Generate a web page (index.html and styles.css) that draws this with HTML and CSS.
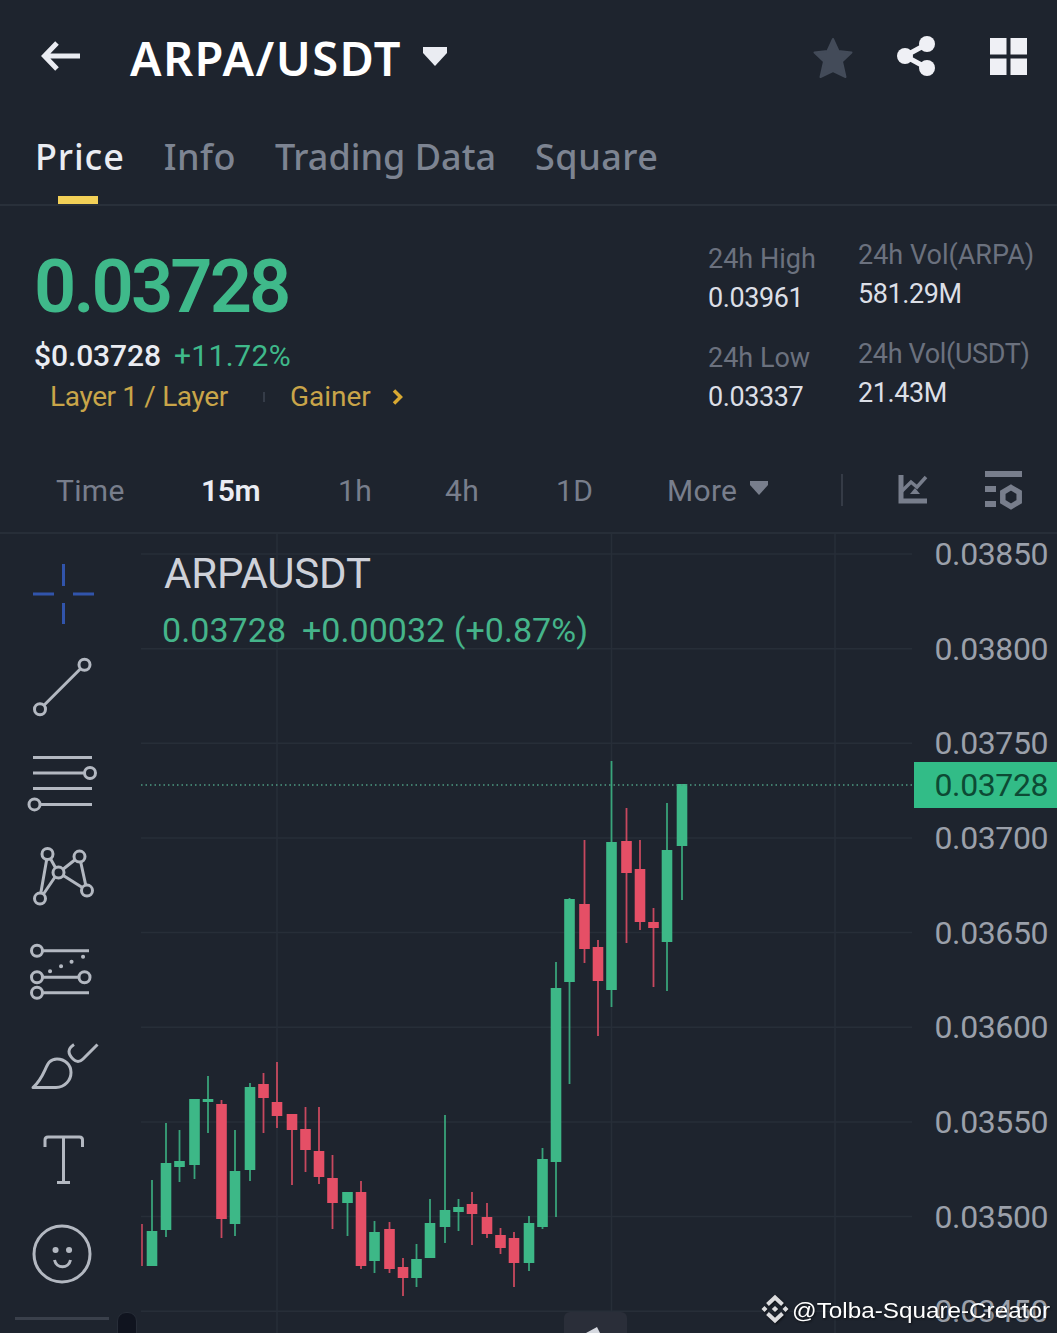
FILE: index.html
```html
<!DOCTYPE html>
<html lang="en">
<head>
  <meta charset="UTF-8" />
  <meta name="viewport" content="width=device-width, initial-scale=1.0"/>
  <title>ARPA/USDT</title>
  <link rel="stylesheet" href="styles.css">
</head>
<body>

  <!-- Header -->
  <header>
    <svg class="back" width="42" height="34" viewBox="0 0 42 34"><path d="M17 4 4.500 17 17 30M4 17h36"/></svg>
    <h1>ARPA/USDT</h1>
    <svg class="caret" width="24" height="20" viewBox="0 0 24 20"><path d="M0 0h24v6L12 19 0 6z"/></svg>
    <div class="actions">
      <svg class="star" width="40" height="42" viewBox="0 0 40 42"><path d="M20 2l5.500 12 13 1.500-9.500 9 3.500 15.500-12.500-6-12.500 6L11 24.500l-9.500-9 13-1.500z"/></svg>
      <svg class="share" width="40" height="42" viewBox="0 0 40 42"><path d="M30 9 8 21l22 12"/><circle cx="30" cy="9" r="8"/><circle cx="8" cy="21" r="8"/><circle cx="30" cy="33" r="8"/></svg>
      <svg class="apps" width="37" height="37" viewBox="0 0 37 37"><path d="M0 0h16.500v16.500H0zM20.500 0H37v16.500H20.500zM0 20.500h16.500V37H0zM20.500 20.500H37V37H20.500z"/></svg>
    </div>
  </header>

  <!-- Tabs -->
  <nav class="tabs">
    <a class="active" href="#price">Price</a>
    <a class="info" href="#info">Info</a>
    <a class="data" href="#data">Trading Data</a>
    <a class="square" href="#square">Square</a>
  </nav>

  <!-- Ticker -->
  <section class="ticker" id="price">
    <div class="quote">
      <div class="last">0.03728</div>
      <div class="fiat"><span class="usd">$0.03728</span><span class="change">+11.72%</span></div>
      <div class="tags">
        <span class="tag-layer">Layer 1 / Layer</span>
        <i></i>
        <span class="tag-gainer">Gainer</span>
        <svg width="11" height="16" viewBox="0 0 11 16"><path d="M2 1.500 8.500 8 2 14.500"/></svg>
      </div>
    </div>
    <dl class="stats">
      <dt>24h High</dt><dd>0.03961</dd>
      <dt>24h Low</dt><dd>0.03337</dd>
    </dl>
    <dl class="stats volume">
      <dt>24h Vol(ARPA)</dt><dd>581.29M</dd>
      <dt class="usdt">24h Vol(USDT)</dt><dd>21.43M</dd>
    </dl>
  </section>

  <!-- Timeframes -->
  <div class="frames">
    <span>Time</span>
    <span class="active">15m</span>
    <span>1h</span>
    <span>4h</span>
    <span>1D</span>
    <span class="more">More <svg width="20" height="15" viewBox="0 0 20 15"><path d="M1 0h18v4l-9 10L1 4z"/></svg></span>
    <i></i>
    <svg class="indicator" width="30" height="32" viewBox="0 0 30 32">
      <path d="M3 1v26h26" stroke-width="5"/>
      <path d="M4 17l9-9 6 5L28 3" stroke-width="3.500"/>
      <path d="M12 20h10l-5-6z" fill="#787e8c" stroke="none"/>
    </svg>
    <svg class="settings" width="38" height="40" viewBox="0 0 38 40">
      <path d="M0 4h37M0 19h11M0 34h11" stroke-width="6"/>
      <path d="M26 17.500l8.200 4.800v9.400L26 36.500l-8.200-4.800v-9.400z" stroke-width="5.500"/>
    </svg>
  </div>

  <main>
    <!-- Drawing tools -->
    <aside>
      <svg class="cross" width="90" height="94" viewBox="0 0 90 94"><path d="M13 47h21M53 47h21M43.500 17v22M43.500 56v21"/></svg>
      <svg width="90" height="94" viewBox="0 0 90 94"><path d="M24 64.200l36.500-36.500"/><circle cx="64.500" cy="23.700" r="5.500"/><circle cx="20" cy="68.200" r="5.500"/></svg>
      <svg width="90" height="94" viewBox="0 0 90 94"><path d="M13 21.400h59M13 37h51M13 52.400h59M20 68.400h52"/><circle cx="70" cy="37" r="5.500"/><circle cx="14.500" cy="68.400" r="5.500"/></svg>
      <svg width="90" height="94" viewBox="0 0 90 94"><path d="M26.700 29.500 20.800 63M30.500 28.700l5 9M35 47 23.500 64M43 39.300l12-9.500M43.300 45.600l19 12M60.700 32l5 23"/><circle cx="27.500" cy="24" r="5.500"/><circle cx="59.500" cy="26.600" r="5.500"/><circle cx="38.500" cy="42.600" r="5.500"/><circle cx="20" cy="68.600" r="5.500"/><circle cx="67" cy="60.600" r="5.500"/></svg>
      <svg width="90" height="94" viewBox="0 0 90 94"><path d="M22.500 26.800H69M22.500 53.300H59M22.500 68.800H69"/><circle cx="17" cy="26.800" r="5.500"/><circle cx="17" cy="53.300" r="5.500"/><circle cx="64.500" cy="53.300" r="5.500"/><circle cx="17" cy="68.800" r="5.500"/><path class="dots" d="M30 47.300h.1M41 42.300h.1M51.500 37.800h.1M63 32.800h.1"/></svg>
      <svg width="90" height="94" viewBox="0 0 90 94"><path stroke-linejoin="round" d="M13 69.500C28 56 24 41 37 41c8 0 14 6 14 13.500S45 69.500 36 69.500zM54 26.500C47 31 48 36 53 41c4 4 7 3 10 0l14.500-14.500"/></svg>
      <svg width="90" height="94" viewBox="0 0 90 94"><path d="M25 34v-7q0-3 3-3h31.500q3 0 3 3v7M43.500 24v45.500M37 69.500h13"/></svg>
      <svg width="90" height="94" viewBox="0 0 90 94"><circle cx="42" cy="47" r="28"/><path d="M34.500 53c2 9 14 9 16 0"/><path class="eyes" d="M35.500 43h.1M49 43h.1"/></svg>
    </aside>

    <!-- Candles, prices and grid are drawn by chart.js -->
    <svg id="chart" width="916" height="799" viewBox="141 534 916 799">
      <g id="grid"></g>
      <g id="candles"></g>
      <path class="last-line" d="M141 785H914"/>
      <text class="symbol" x="164" y="587.500" textLength="207">ARPAUSDT</text>
      <text class="delta" x="162" y="641.500" textLength="124">0.03728</text>
      <text class="delta" x="302" y="641.500" textLength="286">+0.00032 (+0.87%)</text>
      <g id="axis"></g>
      <rect class="badge" x="914" y="762" width="143" height="46"/>
      <text class="badge-text" x="934.500" y="796" textLength="114">0.03728</text>
      <rect class="scroll-btn" x="564" y="1312" width="63" height="40" rx="6"/>
      <path class="scroll-arrow" d="M586 1333l11-6 3 6z"/>
    </svg>

    <div class="tools-end"></div>
    <div class="handle"></div>

    <!-- Watermark -->
    <svg class="watermark" width="300" height="36" viewBox="757 1292 300 36">
      <path d="M767.500 1304.500l7.500-7 7.500 7M767.500 1313.500l7.500 7 7.500-7" fill="none" stroke="#dcdcde" stroke-width="4"/>
      <path d="M775 1306l3.200 3-3.200 3-3.200-3zM764.500 1306l3 3-3 3-3-3zM785.500 1306l3 3-3 3-3-3z" fill="#dcdcde"/>
      <text x="792" y="1318" textLength="258" lengthAdjust="spacingAndGlyphs">@Tolba-Square-Creator</text>
    </svg>
  </main>

  <script src="chart.js"></script>
</body>
</html>
```
FILE: styles.css
```css
/* --------------------------------
   Reset / Basic
----------------------------------- */
* {
  margin: 0;
  padding: 0;
  box-sizing: border-box;
}
body {
  height: 1333px;
  overflow: hidden;
  font-family: Roboto, 'Liberation Sans', sans-serif;
  color: #eaecf2;
  background: #1e242e;
}
a {
  color: inherit;
  text-decoration: none;
}
svg {
  display: block;
  flex: none;
}

/* --------------------------------
   Header
----------------------------------- */
header {
  height: 116px;
  padding: 0 30px 0 40px;
  display: flex;
  align-items: center;
}
header h1 {
  width: 293px;
  margin-left: 48px;
  font-family: 'Noto Sans', sans-serif;
  font-size: 47px;
  font-weight: 600;
  line-height: 60px;
  letter-spacing: 1.4px;
  white-space: nowrap;
  color: #fff;
}
.back {
  margin-bottom: 4px;
  fill: none;
  stroke: #eaecf2;
  stroke-width: 5;
}
.caret {
  margin-bottom: 2px;
  fill: #eaecf2;
}
.actions {
  margin-left: auto;
  display: flex;
  align-items: center;
}
.star {
  margin-right: 44px;
  fill: #434b59;
  stroke: #434b59;
  stroke-width: 2;
  stroke-linejoin: round;
}
.share {
  margin-right: 53px;
  margin-bottom: 4px;
  fill: #eff0f5;
}
.share path {
  fill: none;
  stroke: #eff0f5;
  stroke-width: 5;
}
.apps {
  margin-bottom: 3px;
  fill: #eff0f5;
}

/* --------------------------------
   Tabs
----------------------------------- */
.tabs {
  height: 90px;
  padding-left: 35px;
  display: flex;
  gap: 39px;
  border-bottom: 2px solid #29303a;
  font-family: 'Noto Sans', sans-serif;
  font-size: 36px;
  font-weight: 500;
  line-height: 81px;
  white-space: nowrap;
  color: #7d8492;
}
.tabs .active {
  position: relative;
  letter-spacing: 0.9px;
  color: #eaecf2;
}
.tabs .active::after {
  content: "";
  position: absolute;
  left: 23px;
  bottom: 0;
  width: 40px;
  height: 8px;
  background: #f2d057;
}
.info,
.square {
  letter-spacing: 0.5px;
}

/* --------------------------------
   Ticker
----------------------------------- */
.ticker {
  height: 246px;
  padding-left: 34px;
  display: flex;
}
.quote {
  width: 674px;
  padding-top: 40px;
}
.last {
  font-size: 74px;
  font-weight: 600;
  line-height: 82px;
  letter-spacing: -2.9px;
  color: #3fb98a;
}
.fiat {
  display: flex;
  gap: 13px;
  font-size: 30px;
  font-weight: 500;
  line-height: 56px;
}
.usd {
  letter-spacing: -0.1px;
}
.change {
  font-weight: 400;
  letter-spacing: 0.4px;
  color: #3fb98a;
}
.tags {
  padding-left: 16px;
  display: flex;
  align-items: center;
  font-size: 28px;
  line-height: 26px;
  color: #c9a549;
}
.tags i {
  width: 2px;
  height: 10px;
  margin: 0 25px 0 35px;
  background: #353c48;
}
.tags svg {
  margin-left: 21px;
  fill: none;
  stroke: #d9a932;
  stroke-width: 3.5;
}
.tag-layer {
  letter-spacing: -0.35px;
}
.stats {
  width: 150px;
  padding-top: 34px;
  font-size: 27px;
  line-height: 39px;
  white-space: nowrap;
}
.stats dt {
  color: #6b717e;
}
.stats dd {
  margin-bottom: 21px;
  letter-spacing: -0.4px;
  color: #dcdfe6;
}
.volume {
  padding-top: 30px;
}
.volume .usdt {
  letter-spacing: -0.35px;
}

/* --------------------------------
   Timeframes
----------------------------------- */
.frames {
  height: 82px;
  padding-left: 56px;
  display: grid;
  grid-template-columns: 145px 137px 107px 111px 111px 174px 57px 87px auto;
  align-items: center;
  border-bottom: 2px solid #272e38;
  font-size: 30px;
  line-height: 78px;
  white-space: nowrap;
  color: #787e8c;
}
.frames span {
  margin-bottom: 2px;
  letter-spacing: 0.3px;
}
.frames .active {
  font-weight: 600;
  letter-spacing: -0.4px;
  color: #eaecf2;
}
.more {
  display: flex;
  align-items: center;
  gap: 12px;
}
.more svg {
  margin-bottom: 5px;
  fill: #787e8c;
}
.frames i {
  width: 2px;
  height: 32px;
  margin-bottom: 4px;
  background: #353b46;
}
.indicator,
.settings {
  margin-bottom: 5px;
  fill: none;
  stroke: #787e8c;
}

/* --------------------------------
   Chart
----------------------------------- */
main {
  position: relative;
  height: 799px;
  display: flex;
}
aside {
  width: 141px;
  padding: 13px 0 0 20px;
  display: flex;
  flex-direction: column;
  gap: 0.3px;
}
aside svg {
  fill: none;
  stroke: #b3b8c1;
  stroke-width: 3;
}
aside .cross {
  stroke: #3154ab;
}
.dots,
.eyes {
  stroke-width: 4;
  stroke-linecap: round;
}
.eyes {
  stroke-width: 6;
}
#grid path {
  stroke: #272e38;
  stroke-width: 1.5;
}
.up {
  fill: #3db887;
}
.down {
  fill: #e54f66;
}
.wick {
  opacity: 0.85;
}
.last-line {
  stroke: #4d9a82;
  stroke-width: 1.5;
  stroke-dasharray: 1.5 3;
}
.symbol {
  font-size: 42px;
  fill: #ced1d9;
}
.delta {
  font-size: 34px;
  fill: #45b48a;
}
#axis text {
  font-size: 32px;
  fill: #9ba0aa;
}
.badge {
  fill: #32bc87;
}
.badge-text {
  font-size: 32px;
  fill: #0d4a34;
}
.scroll-btn {
  fill: #2a2e39;
}
.scroll-arrow {
  fill: #d5d8df;
}
.tools-end {
  position: absolute;
  left: 15px;
  top: 783px;
  width: 94px;
  height: 3px;
  background: #3a404b;
}
.handle {
  position: absolute;
  left: 117px;
  top: 778px;
  width: 20px;
  height: 40px;
  border: 1px solid #272d38;
  border-radius: 9px;
  background: #10141f;
}
.watermark {
  position: absolute;
  right: 0;
  top: 758px;
  filter: drop-shadow(1px 1px 1px rgba(0, 0, 0, 0.6));
}
.watermark text {
  font-family: 'Liberation Sans', Arial, sans-serif;
  font-size: 22px;
  fill: #fff;
}
```
FILE: chart.js
```js
const NS = 'http://www.w3.org/2000/svg';

function add(parent, tag, attrs, text) {
  const el = document.createElementNS(NS, tag);
  for (const key in attrs) el.setAttribute(key, attrs[key]);
  if (text) el.textContent = text;
  document.getElementById(parent).appendChild(el);
}

// x, wick top, body top, body bottom, wick bottom, direction
const candles = [
  [152, 1180, 1231, 1266, 1266, 'up'],
  [166, 1123, 1163, 1230, 1237, 'up'],
  [179.5, 1130, 1161, 1167, 1182, 'up'],
  [194.5, 1099, 1099, 1165, 1179, 'up'],
  [208, 1076, 1099, 1102, 1133, 'up'],
  [221.5, 1100, 1104, 1219, 1238, 'down'],
  [235, 1130, 1171, 1224, 1236, 'up'],
  [250, 1083, 1087, 1170, 1181, 'up'],
  [263.5, 1073, 1084, 1098, 1133, 'down'],
  [277, 1062, 1102, 1116, 1128, 'down'],
  [292, 1114, 1114, 1130, 1185, 'down'],
  [305.5, 1107, 1129, 1150, 1172, 'down'],
  [319, 1107, 1151, 1177, 1184, 'down'],
  [332.5, 1155, 1178, 1203, 1229, 'down'],
  [347.5, 1192, 1192, 1203, 1236, 'up'],
  [361, 1181, 1192, 1266, 1269, 'down'],
  [374.5, 1221, 1232, 1261, 1273, 'up'],
  [389.5, 1222, 1229, 1269, 1273, 'down'],
  [403, 1258, 1267, 1278, 1296, 'down'],
  [416.5, 1244, 1259, 1278, 1287, 'up'],
  [430, 1199, 1223, 1258, 1258, 'up'],
  [445, 1115, 1210, 1227, 1243, 'up'],
  [458.5, 1199, 1207, 1212, 1231, 'up'],
  [472, 1192, 1204, 1214, 1245, 'down'],
  [487, 1203, 1217, 1234, 1238, 'down'],
  [500.5, 1228, 1235, 1248, 1254, 'down'],
  [514, 1232, 1238, 1263, 1287, 'down'],
  [529, 1216, 1223, 1263, 1271, 'up'],
  [542.5, 1148, 1159, 1227, 1229, 'up'],
  [556, 962, 988, 1162, 1217, 'up'],
  [569.5, 898, 899, 982, 1084, 'up'],
  [584.5, 840, 904, 949, 963, 'down'],
  [598, 940, 947, 981, 1036, 'down'],
  [611.5, 761, 842, 990, 1007, 'up'],
  [626.5, 808, 841, 873, 943, 'down'],
  [640, 840, 869, 922, 930, 'down'],
  [653.5, 908, 922, 928, 987, 'down'],
  [667, 803, 850, 942, 991, 'up'],
  [682, 784, 784, 846, 900, 'up']
];

const prices = ['0.03850', '0.03800', '0.03750', '0.03700', '0.03650', '0.03600', '0.03550', '0.03500', '0.03450'];

prices.forEach((price, i) => {
  const y = 554 + i * 94.65;
  add('grid', 'path', { d: `M141 ${y}H912` });
  add('axis', 'text', { x: 934.5, y: y + 11, textLength: 114 }, price);
});
[277, 611.5, 835].forEach(x => add('grid', 'path', { d: `M${x} 534V1333` }));

// first candle is cut off by the left edge, only its wick shows
add('candles', 'rect', { class: 'down wick', x: 141.2, y: 1224, width: 1.6, height: 42 });

candles.forEach(([x, high, top, bottom, low, dir]) => {
  add('candles', 'rect', { class: dir + ' wick', x: x - 0.9, y: high, width: 1.8, height: low - high });
  add('candles', 'rect', { class: dir, x: x - 5.3, y: top, width: 10.6, height: bottom - top });
});
```
